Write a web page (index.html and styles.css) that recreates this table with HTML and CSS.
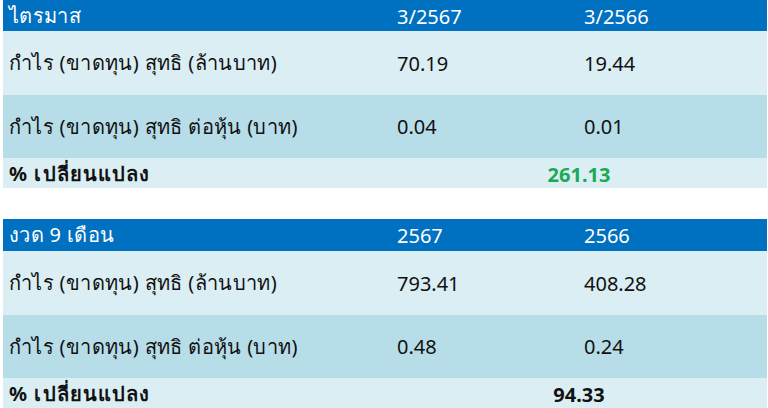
FILE: index.html
```html
<!DOCTYPE html>
<html lang="th">
<head>
<meta charset="utf-8">
<link rel="stylesheet" href="styles.css">
</head>
<body>
<div class="page">
  <div class="table">
    <div class="row head"><div class="c1">ไตรมาส</div><div class="c2">3/2567</div><div class="c3">3/2566</div></div>
    <div class="row tall light"><div class="c1">กำไร (ขาดทุน) สุทธิ (ล้านบาท)</div><div class="c2">70.19</div><div class="c3">19.44</div></div>
    <div class="row tall dark"><div class="c1">กำไร (ขาดทุน) สุทธิ ต่อหุ้น (บาท)</div><div class="c2">0.04</div><div class="c3">0.01</div></div>
    <div class="row short light"><div class="c1 bold">% เปลี่ยนแปลง</div><div class="span bold green">261.13</div></div>
  </div>
  <div class="table second">
    <div class="row head"><div class="c1">งวด 9 เดือน</div><div class="c2">2567</div><div class="c3">2566</div></div>
    <div class="row tall light"><div class="c1">กำไร (ขาดทุน) สุทธิ (ล้านบาท)</div><div class="c2">793.41</div><div class="c3">408.28</div></div>
    <div class="row tall dark"><div class="c1">กำไร (ขาดทุน) สุทธิ ต่อหุ้น (บาท)</div><div class="c2">0.48</div><div class="c3">0.24</div></div>
    <div class="row short light"><div class="c1 bold">% เปลี่ยนแปลง</div><div class="span bold">94.33</div></div>
  </div>
</div>
</body>
</html>
```
FILE: styles.css
```css
html, body {
  margin: 0;
  padding: 0;
  background: #ffffff;
}
.page {
  padding: 0 1px 0 3px;
  font-family: "Noto Sans", "DejaVu Sans", sans-serif;
  font-size: 20px;
  color: #111111;
}
.table {
  display: flex;
  flex-direction: column;
}
.second {
  margin-top: 31px;
}
.row {
  display: grid;
  grid-template-columns: 388px 187px 1fr;
  align-items: center;
}
.row > div {
  padding-left: 6px;
  white-space: nowrap;
}
.row > .c1 {
  letter-spacing: 0.35px;
}
.row > .c1.bold {
  letter-spacing: 1.1px;
}
.head {
  height: 31px;
  background: #0070c0;
  color: #ffffff;
}
.second .head {
  height: 32px;
}
.head > div {
  padding-bottom: 4px;
}
.tall {
  height: 64px;
}
.tall.dark {
  height: 63px;
}
.short {
  height: 30px;
}
.light {
  background: #daeef3;
}
.dark {
  background: #b7dde8;
}
.span {
  grid-column: 2 / 4;
  text-align: center;
  padding-left: 0 !important;
}
.bold {
  font-weight: bold;
}
.green {
  color: #1aaa55;
}
```
